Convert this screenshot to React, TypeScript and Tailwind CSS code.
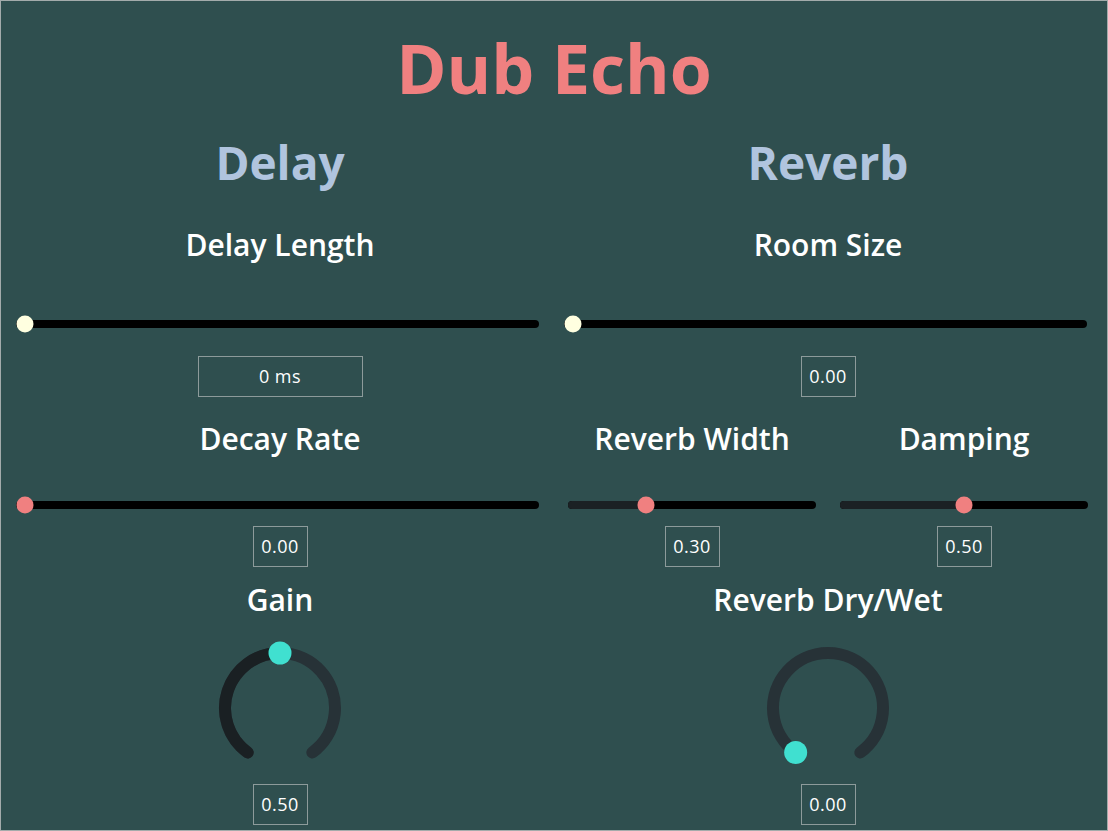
import React from "react";

const FONT = { fontFamily: '"Open Sans", "Liberation Sans", sans-serif' };

type SliderProps = {
  value: number;
  thumb: string;
  fill?: boolean;
};

function Slider({ value, thumb, fill }: SliderProps) {
  const pos = `calc(8.5px + ${value} * (100% - 17px))`;
  return (
    <div className="relative h-2 rounded-full bg-black">
      {fill && (
        <div
          className="absolute inset-y-0 left-0 rounded-full bg-[#1b2124]"
          style={{ width: pos }}
        />
      )}
      <div
        className={`absolute top-1/2 h-[17px] w-[17px] -translate-x-1/2 -translate-y-1/2 rounded-full ${thumb}`}
        style={{ left: pos }}
      />
    </div>
  );
}

function ValueBox({ text, wide }: { text: string; wide?: boolean }) {
  return (
    <div
      className={`mx-auto flex h-[41px] items-center justify-center border border-[#8d9b9b] text-[18px] font-medium tracking-[0.5px] text-white ${
        wide ? "w-[165px]" : "w-[55px]"
      }`}
    >
      {text}
    </div>
  );
}

// rotary knob: 288° sweep, gap centred at the bottom
function Knob({ value }: { value: number }) {
  const cx = 65;
  const cy = 71;
  const r = 55;
  const start = -144;
  const sweep = 288;
  const pt = (deg: number) => {
    const a = (deg * Math.PI) / 180;
    return [cx + r * Math.sin(a), cy - r * Math.cos(a)];
  };
  const arc = (from: number, to: number) => {
    const [x1, y1] = pt(from);
    const [x2, y2] = pt(to);
    const large = to - from > 180 ? 1 : 0;
    return `M ${x1} ${y1} A ${r} ${r} 0 ${large} 1 ${x2} ${y2}`;
  };
  const angle = start + sweep * value;
  const [tx, ty] = pt(angle);
  return (
    <svg width="130" height="142" viewBox="0 0 130 142">
      <path d={arc(start, start + sweep)} fill="none" stroke="#273237" strokeWidth="12" strokeLinecap="round" />
      {value > 0 && (
        <path d={arc(start, angle)} fill="none" stroke="#1a2023" strokeWidth="12" strokeLinecap="round" />
      )}
      <circle cx={tx} cy={ty} r="11.5" fill="#40e0d0" />
    </svg>
  );
}

function Heading({ children }: { children: React.ReactNode }) {
  return (
    <div className="flex h-[93px] items-center justify-center text-[46px] font-bold leading-none text-[#b0c4de]">
      {children}
    </div>
  );
}

function Label({ children, className }: { children: React.ReactNode; className: string }) {
  return (
    <div className={`flex items-center justify-center pb-1 text-[30px] font-semibold leading-none text-white ${className}`}>
      {children}
    </div>
  );
}

export default function App() {
  return (
    <div
      className="box-border h-[831px] w-full overflow-hidden border border-[#a3abab] bg-[#2f4f4f] px-[7px]"
      style={FONT}
    >
      <h1 className="mt-[19px] flex h-[95px] items-center justify-center text-[68px] font-bold leading-none text-[#f08080]">
        Dub Echo
      </h1>

      <div className="grid grid-cols-2 gap-1">
        {/* delay column */}
        <div className="flex flex-col">
          <Heading>Delay</Heading>
          <Label className="h-[77px]">Delay Length</Label>
          <div className="mt-[15px] flex h-[48px] flex-col justify-center pl-2 pr-[13px]">
            <Slider value={0} thumb="bg-[#ffffe0]" />
          </div>
          <div className="mt-2">
            <ValueBox text="0 ms" wide />
          </div>
          <Label className="h-[88px]">Decay Rate</Label>
          <div className="flex h-[39px] flex-col justify-center pl-2 pr-[13px]">
            <Slider value={0} thumb="bg-[#f08080]" />
          </div>
          <div className="mt-[2px]">
            <ValueBox text="0.00" />
          </div>
          <Label className="h-[70px]">Gain</Label>
          <div className="flex h-[142px] justify-center">
            <Knob value={0.5} />
          </div>
          <div className="mt-[5px]">
            <ValueBox text="0.50" />
          </div>
        </div>

        {/* reverb column */}
        <div className="flex flex-col">
          <Heading>Reverb</Heading>
          <Label className="h-[77px]">Room Size</Label>
          <div className="mt-[15px] flex h-[48px] flex-col justify-center pl-2 pr-[13px]">
            <Slider value={0} thumb="bg-[#ffffe0]" />
          </div>
          <div className="mt-2">
            <ValueBox text="0.00" />
          </div>
          <div className="grid grid-cols-2">
            <div className="flex flex-col">
              <Label className="h-[88px]">Reverb Width</Label>
              <div className="flex h-[39px] flex-col justify-center px-3">
                <Slider value={0.3} thumb="bg-[#f08080]" fill />
              </div>
              <div className="mt-[2px]">
                <ValueBox text="0.30" />
              </div>
            </div>
            <div className="flex flex-col">
              <Label className="h-[88px]">Damping</Label>
              <div className="flex h-[39px] flex-col justify-center px-3">
                <Slider value={0.5} thumb="bg-[#f08080]" fill />
              </div>
              <div className="mt-[2px]">
                <ValueBox text="0.50" />
              </div>
            </div>
          </div>
          <Label className="h-[70px]">Reverb Dry/Wet</Label>
          <div className="flex h-[142px] justify-center">
            <Knob value={0} />
          </div>
          <div className="mt-[5px]">
            <ValueBox text="0.00" />
          </div>
        </div>
      </div>
    </div>
  );
}
